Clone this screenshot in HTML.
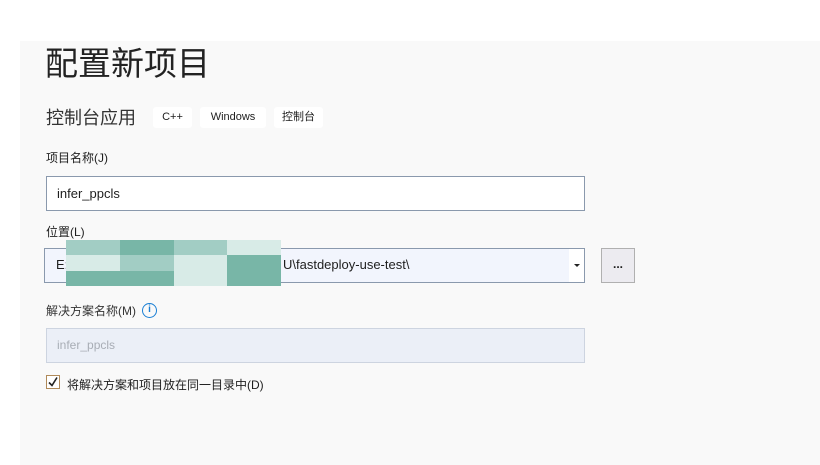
<!DOCTYPE html>
<html><head><meta charset="utf-8"><style>
*{margin:0;padding:0;box-sizing:border-box}
body{width:820px;height:465px;background:#fff;position:relative;overflow:hidden;font-family:"Liberation Sans","Noto Sans CJK SC",sans-serif;color:#1e1e1e}
.panel{position:absolute;left:20px;top:41px;width:800px;height:424px;background:#f9f9f9}
.a{position:absolute;white-space:nowrap}
.tag{position:absolute;top:107px;height:21px;background:#fff;border-radius:3px;font-size:11px;line-height:21px;text-align:center}
.lbl{font-size:12px}
.inp{position:absolute;left:46px;width:539px;height:35px;border:1px solid #8a99ad;font-size:13px;line-height:33px;padding-left:10px;background:#fff}
</style></head><body>
<div class="panel"></div>
<div class="a" style="left:45px;top:43px;font-size:33px;line-height:42px;color:#222">配置新项目</div>
<div class="a" style="left:46px;top:105px;font-size:18px;line-height:26px;color:#333">控制台应用</div>
<div class="tag" style="left:153px;width:39px">C++</div>
<div class="tag" style="left:200px;width:66px">Windows</div>
<div class="tag" style="left:274px;width:49px">控制台</div>
<div class="a lbl" style="left:46px;top:149px">项目名称(J)</div>
<div class="inp" style="top:176px">infer_ppcls</div>
<div class="a lbl" style="left:46px;top:223px">位置(L)</div>
<div class="inp" style="top:248px;left:44px;width:541px;background:#f2f5fd;padding-left:12px"></div>
<div class="a" style="left:56px;top:257px;font-size:13px">E:</div>
<div class="a" style="left:283px;top:257px;font-size:13px">U\fastdeploy-use-test\</div>
<div class="a" style="left:569px;top:249px;width:15px;height:33px;background:#fff"></div>
<div class="a" style="left:574px;top:264px;width:0;height:0;border-left:3px solid transparent;border-right:3px solid transparent;border-top:3px solid #222"></div>
<div class="a" style="left:601px;top:248px;width:34px;height:35px;background:#ecebf0;border:1px solid #b0b0b0;font-size:12px;text-align:center;line-height:30px;font-weight:bold">...</div>
<div class="a" style="left:66px;top:240px;width:215px;height:46px;display:grid;grid-template-columns:repeat(4,1fr);grid-template-rows:15px 16px 15px">
<div style="background:#a2cdc4"></div><div style="background:#78b6a7"></div><div style="background:#a2cdc4"></div><div style="background:#d8ebe7"></div>
<div style="background:#d8ebe7"></div><div style="background:#a2cdc4"></div><div style="background:#d8ebe7"></div><div style="background:#78b6a7"></div>
<div style="background:#78b6a7"></div><div style="background:#78b6a7"></div><div style="background:#d8ebe7"></div><div style="background:#78b6a7"></div>
</div>
<div class="a lbl" style="left:46px;top:302px;color:#333">解决方案名称(M)</div>
<div class="a" style="left:142px;top:303px;width:15px;height:15px;border:1.5px solid #1a7fd4;border-radius:50%;color:#1a7fd4;font-size:10px;line-height:12px;text-align:center;font-weight:bold">i</div>
<div class="inp" style="top:328px;background:#ebeff7;border-color:#cdd4e0;color:#a8adb5;font-size:12px">infer_ppcls</div>
<div class="a" style="left:46px;top:375px;width:14px;height:14px;border:1px solid #b08a5a;background:#fff"></div>
<svg class="a" style="left:46px;top:375px" width="14" height="14"><path d="M3 7.5 L6 10.5 L11 2.5" stroke="#222" stroke-width="1.6" fill="none"/></svg>
<div class="a lbl" style="left:67px;top:376px">将解决方案和项目放在同一目录中(D)</div>
</body></html>
